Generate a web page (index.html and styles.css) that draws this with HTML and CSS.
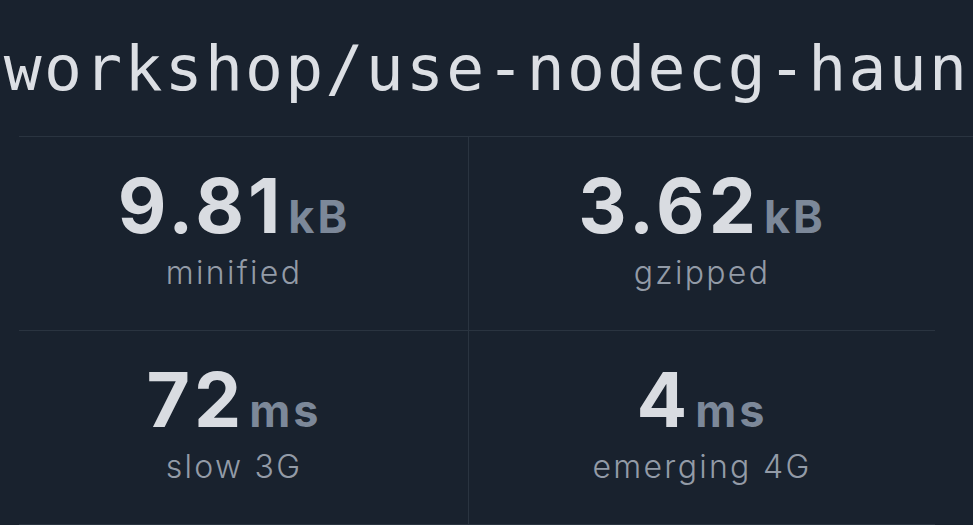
FILE: index.html
```html
<!DOCTYPE html>
<html lang="en">
<head>
    <meta charset="UTF-8">
    <meta name="viewport" content="width=device-width, initial-scale=1.0">
    <title>workshop/use-nodecg-haun</title>
    <link rel="stylesheet" href="styles.css">
</head>
<body>

    <h1 class="pkg-name"><span>workshop/use-nodecg-haun</span></h1>

    <div class="stats">
        <div class="stat">
            <div class="stat-value">9.81<span class="unit">kB</span></div>
            <div class="stat-label">minified</div>
        </div>
        <div class="stat">
            <div class="stat-value">3.62<span class="unit">kB</span></div>
            <div class="stat-label">gzipped</div>
        </div>
        <div class="stat">
            <div class="stat-value">72<span class="unit">ms</span></div>
            <div class="stat-label">slow 3G</div>
        </div>
        <div class="stat">
            <div class="stat-value">4<span class="unit">ms</span></div>
            <div class="stat-label">emerging 4G</div>
        </div>
    </div>

</body>
</html>
```

FILE: styles.css
```css
body {
    margin: 0;
    background-color: #19222e;
    font-family: Inter, "Noto Sans", sans-serif;
    overflow: hidden;
}
.pkg-name {
    display: flex;
    justify-content: center;
    margin: 39px 0 0;
    font-family: "DejaVu Sans Mono", monospace;
    font-size: 63px;
    font-weight: normal;
    line-height: 60px;
    letter-spacing: 2.3px;
    color: #dcdfe4;
    white-space: nowrap;
}
.stats {
    display: grid;
    grid-template-columns: 450px 466px;
    margin: 37px 0 0 19px;
    border-top: 1px solid #2a3440;
}
.stat {
    padding: 31px 0 41px;
    text-align: center;
    border-bottom: 1px solid #2a3440;
}
.stat:nth-child(odd) {
    padding-right: 19px;
    border-right: 1px solid #2a3440;
}
.stat-value {
    font-size: 75px;
    font-weight: bold;
    line-height: 75px;
    letter-spacing: 4px;
    color: #d9dce1;
}
.unit {
    margin-left: 4px;
    font-size: 45px;
    letter-spacing: 3px;
    color: #7c8899;
}
.stat-label {
    margin-top: 3px;
    font-size: 32px;
    font-weight: 300;
    line-height: 32px;
    letter-spacing: 2.3px;
    color: #939ba7;
}
```
